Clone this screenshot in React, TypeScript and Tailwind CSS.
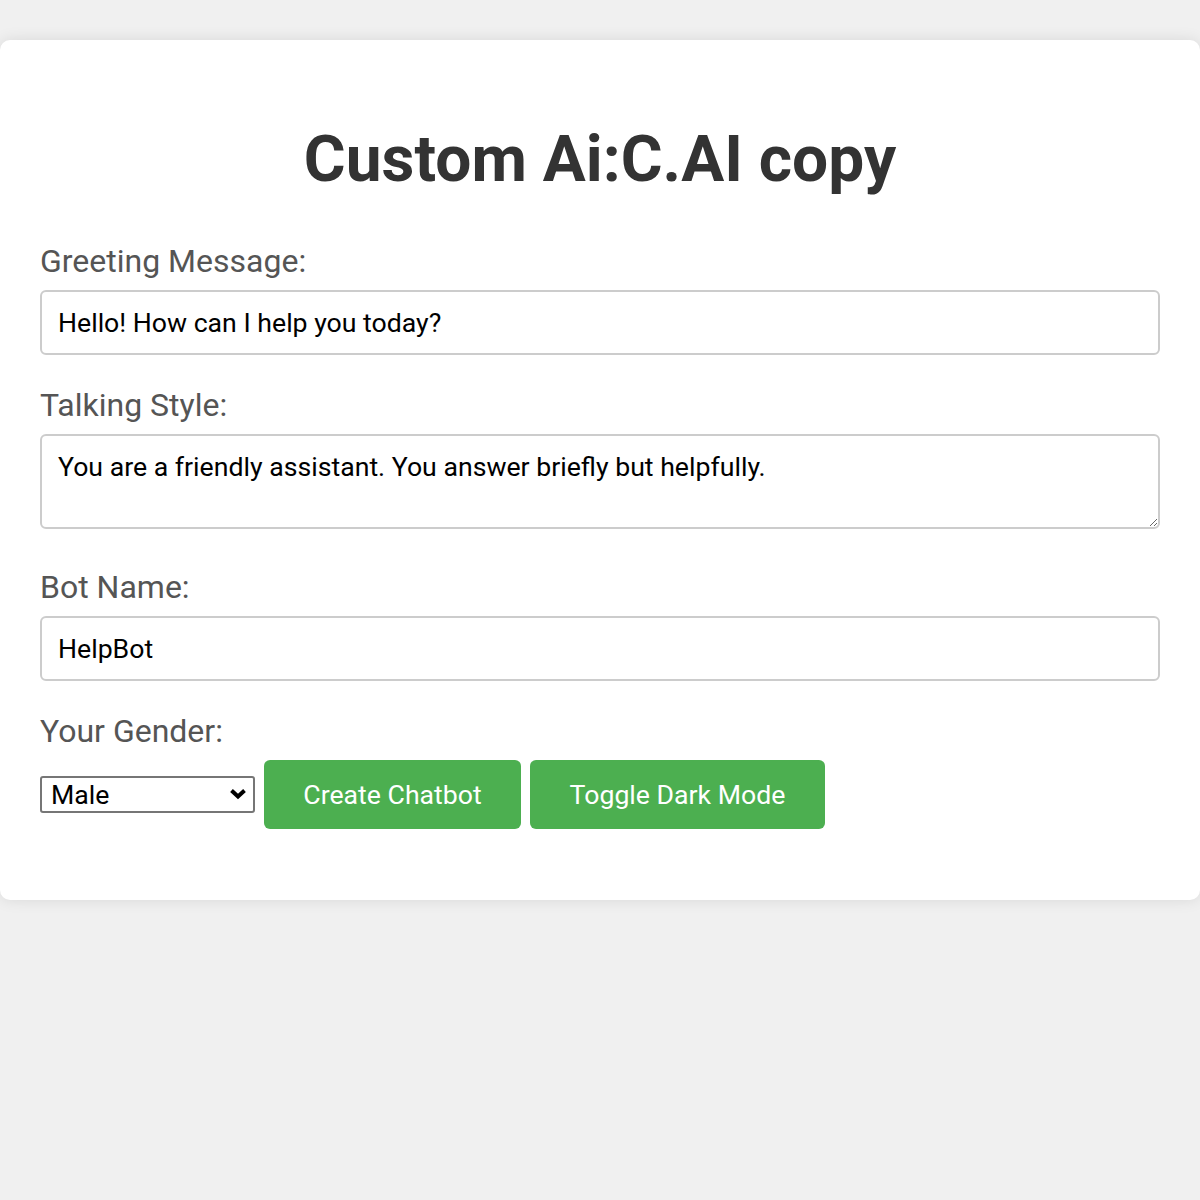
import React from "react";

export default function App() {
  return (
    <div className="min-h-[1200px] bg-[#f0f0f0] pt-[40px]" style={{ fontFamily: "Roboto, 'Liberation Sans', sans-serif" }}>
      <div className="bg-white rounded-[10px] shadow-[0_0_15px_rgba(0,0,0,0.1)] px-[40px] pt-[78px] pb-[71px]">
        <h1 className="text-center text-[#333] font-bold text-[64px] leading-[84px] mb-[41px]">Custom Ai:C.AI copy</h1>

        <label className="block text-[32px] leading-[37px] text-[#555] mb-[10px]">Greeting Message:</label>
        <input
          className="block w-full h-[65px] border-2 border-[#ccc] rounded-[6px] px-[16px] text-[26.67px] text-black outline-none mb-[32px]"
          defaultValue="Hello! How can I help you today?"
        />

        <label className="block text-[32px] leading-[37px] text-[#555] mb-[10px]">Talking Style:</label>
        <textarea
          className="block w-full h-[95px] border-2 border-[#ccc] rounded-[6px] px-[16px] pt-[16px] pb-[12px] text-[26.67px] leading-[31px] text-black outline-none mb-[40px]"
          defaultValue="You are a friendly assistant. You answer briefly but helpfully."
        />

        <label className="block text-[32px] leading-[37px] text-[#555] mb-[10px]">Bot Name:</label>
        <input
          className="block w-full h-[65px] border-2 border-[#ccc] rounded-[6px] px-[16px] text-[26.67px] text-black outline-none mb-[32px]"
          defaultValue="HelpBot"
        />

        <label className="block text-[32px] leading-[37px] text-[#555] mb-[10px]">Your Gender:</label>
        <div className="flex items-center gap-[9px]">
          <div className="relative">
            <select className="appearance-none w-[215px] h-[37px] border-2 border-[#767676] rounded-[3px] pl-[9px] pt-[2px] text-[26.67px] leading-[31px] text-black bg-white outline-none">
              <option>Male</option>
              <option>Female</option>
            </select>
            <svg className="absolute right-[8px] top-[12px] pointer-events-none" width="18" height="12" viewBox="0 0 18 12">
              <path d="M2.5 2.5 L9 8.5 L15.5 2.5" stroke="black" strokeWidth="4" fill="none" />
            </svg>
          </div>
          <button className="h-[69px] w-[257px] bg-[#4CAF50] text-white text-[26.67px] rounded-[6px]">Create Chatbot</button>
          <button className="h-[69px] w-[295px] bg-[#4CAF50] text-white text-[26.67px] rounded-[6px]">Toggle Dark Mode</button>
        </div>
      </div>
    </div>
  );
}
